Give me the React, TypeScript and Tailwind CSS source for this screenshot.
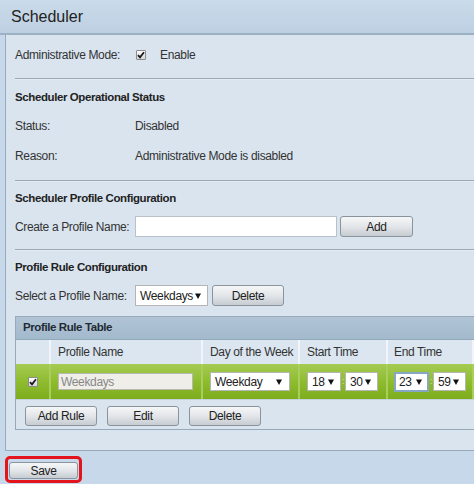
import React from 'react';

const font = { fontFamily: '"Liberation Sans", Arial, sans-serif' };

const Arrow = () => (
  <svg width="6" height="6" viewBox="0 0 6 6" className="shrink-0">
    <polygon points="0,0.5 6,0.5 3,6" fill="#111" />
  </svg>
);

const Check = () => (
  <svg width="8" height="8" viewBox="0 0 8 8">
    <path d="M1 4.2 L3 6.4 L7 1.2" stroke="#1a1a1a" strokeWidth="1.8" fill="none" />
  </svg>
);

const CheckBox = () => (
  <div className="w-[10px] h-[10px] border border-[#8c8c8c] bg-linear-to-b from-[#fdfdfd] to-[#d6d6d6] flex items-center justify-center rounded-[1px]">
    <Check />
  </div>
);

const Button = ({ label, className }: { label: string; className: string }) => (
  <div
    className={`flex items-center justify-center border border-[#8b949c] rounded-[3px] bg-linear-to-b from-[#f5f6f7] via-[#e3e6e9] to-[#c6ccd2] text-[12px] tracking-[-0.35px] text-[#222] ${className}`}
  >
    {label}
  </div>
);

const Select = ({
  value,
  className,
  focused,
}: {
  value: string;
  className: string;
  focused?: boolean;
}) => (
  <div
    className={`flex items-center justify-between bg-white text-[12px] tracking-[-0.35px] text-[#222] ${
      focused ? 'border-2 border-[#86a6c6]' : 'border border-[#b5b5b5]'
    } ${className}`}
  >
    <span>{value}</span>
    <Arrow />
  </div>
);

const Divider = ({ className }: { className: string }) => (
  <div className={`h-px bg-[#9ba9b7] border-b border-[#e3ebf3] box-content ${className}`} />
);

const Title = ({ text, className }: { text: string; className: string }) => (
  <div className={`flex items-center font-bold text-[11.5px] tracking-[-0.4px] text-[#222] ${className}`}>
    {text}
  </div>
);

export default function App() {
  return (
    <div className="w-[474px] h-[484px] overflow-hidden bg-[#c6d8ea] text-[#333]" style={font}>
      {/* Header */}
      <div className="h-[35px] border-b-2 border-[#9db1c4] bg-linear-to-b from-[#cadbea] to-[#bdd0e2] flex items-center pl-[11px]">
        <span className="text-[16px] text-[#222]">Scheduler</span>
      </div>

      {/* Panel */}
      <div className="ml-[5px] w-[520px] h-[416px] border-l border-b border-[#98abbd] bg-[#d9e4ef] pl-[9px] flex flex-col text-[12px] tracking-[-0.35px]">
        <div className="h-[40px] flex items-center">
          <span className="w-[121px]">Administrative Mode:</span>
          <CheckBox />
          <span className="ml-[14px]">Enable</span>
        </div>
        <Divider className="mt-[3px]" />

        <Title text="Scheduler Operational Status" className="mt-[4px] h-[27px]" />
        <div className="h-[29px] flex items-center">
          <span className="w-[120px]">Status:</span>
          <span>Disabled</span>
        </div>
        <div className="h-[32px] flex items-center">
          <span className="w-[120px]">Reason:</span>
          <span>Administrative Mode is disabled</span>
        </div>
        <Divider className="mt-[8px]" />

        <Title text="Scheduler Profile Configuration" className="mt-[4px] h-[26px]" />
        <div className="mt-[4px] h-[21px] flex items-center">
          <span className="w-[120px]">Create a Profile Name:</span>
          <div className="w-[202px] h-[21px] bg-white border border-[#b9c2cb]" />
          <Button label="Add" className="ml-[3px] w-[73px] h-[21px]" />
        </div>
        <Divider className="mt-[12px]" />

        <Title text="Profile Rule Configuration" className="mt-[4px] h-[26px]" />
        <div className="mt-[4px] h-[21px] flex items-center">
          <span className="w-[120px]">Select a Profile Name:</span>
          <Select value="Weekdays" className="w-[73px] h-[21px] pl-[4px] pr-[6px]" />
          <Button label="Delete" className="ml-[4px] w-[72px] h-[21px]" />
        </div>

        {/* Profile Rule Table */}
        <div className="mt-[10px] w-[500px] border border-[#97aabc]">
          <div className="h-[23px] bg-linear-to-b from-[#b0c4d6] to-[#a3b9cc] border-b border-[#93a8bb] flex items-center pl-[7px] font-bold text-[11.5px] tracking-[-0.4px] text-[#1f2a35]">
            Profile Rule Table
          </div>
          <div className="h-[24px] bg-[#dbe6f0] grid grid-cols-[33px_152px_97px_88px_86px_1fr] text-[#333]">
            <div />
            <div className="border-l-2 border-[#f1f5f9] flex items-center pl-[7px]">Profile Name</div>
            <div className="border-l-2 border-[#f1f5f9] flex items-center pl-[7px]">Day of the Week</div>
            <div className="border-l-2 border-[#f1f5f9] flex items-center pl-[7px]">Start Time</div>
            <div className="border-l-2 border-[#f1f5f9] flex items-center pl-[6px]">End Time</div>
            <div className="border-l-2 border-[#f1f5f9] bg-white" />
          </div>
          <div className="h-[35px] bg-linear-to-b from-[#a5cb52] via-[#8fbc2f] to-[#7dac1d] grid grid-cols-[33px_152px_97px_88px_86px_1fr]">
            <div className="flex items-center justify-center pl-[1px]">
              <CheckBox />
            </div>
            <div className="border-l-2 border-[#a8cf5e] flex items-center pl-[7px]">
              <div className="w-[135px] h-[17px] bg-[#efeee9] border border-[#b8b8b0] flex items-center pl-[2px] text-[#888]">
                Weekdays
              </div>
            </div>
            <div className="border-l-2 border-[#a8cf5e] flex items-center pl-[7px]">
              <Select value="Weekday" className="w-[80px] h-[19px] pl-[4px] pr-[7px]" />
            </div>
            <div className="border-l-2 border-[#a8cf5e] flex items-center pl-[7px]">
              <Select value="18" className="w-[34px] h-[19px] pl-[4px] pr-[6px]" />
              <span className="w-[4px] text-center text-[9px] text-[#cfe6a0] leading-none">:</span>
              <Select value="30" className="w-[33px] h-[19px] pl-[4px] pr-[6px]" />
            </div>
            <div className="border-l-2 border-[#a8cf5e] flex items-center pl-[6px]">
              <Select value="23" focused className="w-[35px] h-[20px] pl-[3px] pr-[5px]" />
              <span className="w-[4px] text-center text-[9px] text-[#cfe6a0] leading-none">:</span>
              <Select value="59" className="w-[33px] h-[19px] pl-[4px] pr-[6px]" />
            </div>
            <div className="border-l-2 border-[#a8cf5e]" />
          </div>
          <div className="h-[30px] flex items-start pt-[6px] pl-[9px] gap-[10px] border-t border-[#c6d3df]">
            <Button label="Add Rule" className="w-[72px] h-[20px]" />
            <Button label="Edit" className="w-[72px] h-[20px]" />
            <Button label="Delete" className="w-[72px] h-[20px]" />
          </div>
        </div>
      </div>

      {/* Save */}
      <div className="mt-[5px] ml-[5px] w-[77px] border-[3px] border-[#e3141b] rounded-[5px] pt-[3px] pb-[1px] px-[1px]">
        <Button label="Save" className="w-[69px] h-[17px]" />
      </div>
    </div>
  );
}
